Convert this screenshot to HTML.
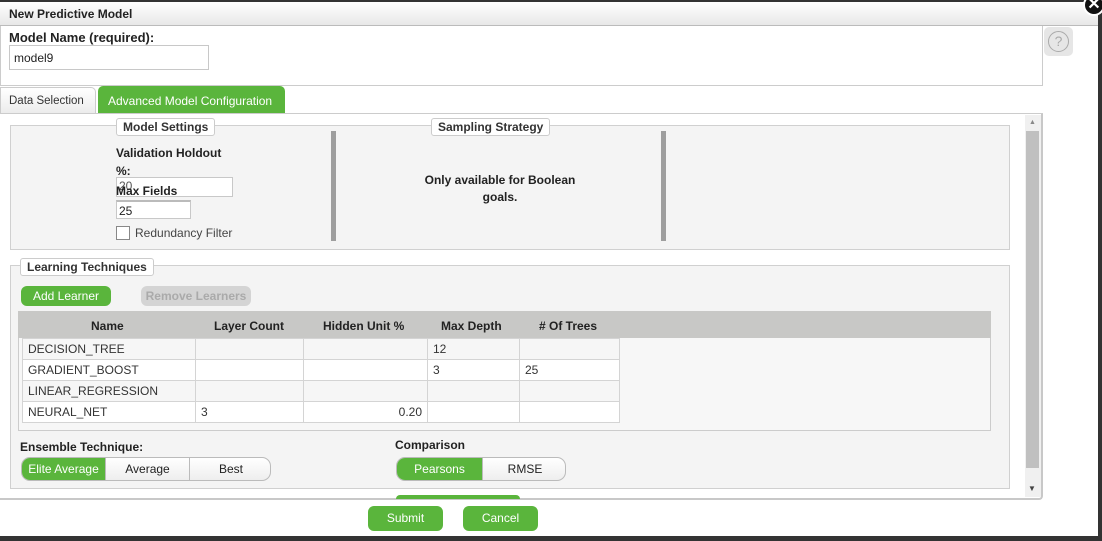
<!DOCTYPE html>
<html><head><style>
*{box-sizing:border-box;margin:0;padding:0}
body{width:1102px;height:541px;background:#333;position:relative;overflow:hidden;font-family:"Liberation Sans",sans-serif;font-size:12px;color:#222}
.a{position:absolute;white-space:nowrap}
.dlg{left:0;top:2px;width:1098px;height:534px;background:#fff}
.hdr{left:0;top:2px;width:1098px;height:24px;background:linear-gradient(#fff,#e8e8e8);border-bottom:1px solid #bbb;font-weight:bold;font-size:12px;padding:5px 9px}
.b{font-weight:bold}
.inp{background:#fff;border:1px solid #c8c8c8;padding:3px 4px;font-size:12px}
.fs{background:#f4f4f4;border:1px solid #d0d0d0}
.leg{background:#fff;border:1px solid #ccc;border-radius:3px;font-weight:bold;padding:1px 6px;font-size:12px;color:#333}
.g{background:#5ab53c;color:#fff;border-radius:6px;text-align:center}
table{border-collapse:collapse}
td{border:1px solid #d4d4d4;height:21px;padding:0 5px;font-size:12px;color:#333;background:#fff}
tr:nth-child(odd) td{background:#f6f6f6}
</style></head><body>
<div class="a dlg"></div>
<div class="a hdr">New Predictive Model</div>
<div class="a" style="left:0;top:26px;width:1043px;height:60px;border:1px solid #ccc;border-top:none"></div>
<div class="a b" style="left:9px;top:30px;font-size:13px">Model Name (required):</div>
<div class="a inp" style="left:9px;top:45px;width:200px;height:25px;padding-top:5px">model9</div>
<div class="a" style="left:1044px;top:27px;width:29px;height:29px;background:#e6e6e6;border-radius:5px"></div>
<div class="a" style="left:1048px;top:31px;width:21px;height:21px;border:1.5px solid #aaa;border-radius:50%;color:#aaa;text-align:center;font-size:14px;line-height:18px">?</div>
<div class="a" style="left:1083px;top:-6px;width:22px;height:22px;background:#111;border:2px solid #fff;border-radius:50%;color:#fff;font-weight:bold;text-align:center;font-size:16px;line-height:17px">✕</div>
<!-- tabs -->
<div class="a" style="left:0;top:113px;width:1043px;height:1px;background:#ccc"></div>
<div class="a" style="left:0;top:87px;width:96px;height:26px;background:linear-gradient(#fff,#ececec);border:1px solid #ccc;border-bottom:none;border-radius:0 5px 0 0;padding:7px 8px;color:#333;font-size:11.5px">Data Selection</div>
<div class="a" style="left:98px;top:86px;width:187px;height:27px;background:#5ab53c;border-radius:5px 5px 0 0;color:#fff;padding:8px 10px">Advanced Model Configuration</div>
<!-- content panel -->
<div class="a" style="left:0;top:114px;width:1043px;height:386px;border-right:2px solid #c8c8c8;border-bottom:2px solid #c8c8c8;border-radius:0 0 4px 0"></div>
<div class="a" style="left:1025px;top:115px;width:16px;height:382px;background:#f0f0f0"></div>
<div class="a" style="left:1026px;top:131px;width:13px;height:337px;background:#c0c0c0"></div>
<div class="a" style="left:1029px;top:119px;font-size:7px;color:#888">▲</div>
<div class="a" style="left:1028px;top:484px;font-size:8px;color:#444">▼</div>
<!-- model settings -->
<div class="a fs" style="left:10px;top:125px;width:1000px;height:125px"></div>
<div class="a leg" style="left:116px;top:118px">Model Settings</div>
<div class="a leg" style="left:431px;top:118px">Sampling Strategy</div>
<div class="a b" style="left:116px;top:144px;line-height:18px">Validation Holdout<br>%:</div>
<div class="a inp" style="left:116px;top:177px;width:117px;height:20px;padding:1px 2px;color:#555">20</div>
<div class="a b" style="left:116px;top:184px">Max Fields</div>
<div class="a inp" style="left:116px;top:200px;width:75px;height:19px;padding:2px 2px;border-top:2px solid #bbb">25</div>
<div class="a" style="left:116px;top:226px;width:14px;height:14px;border:1px solid #888;background:#fff"></div>
<div class="a" style="left:135px;top:226px;color:#444">Redundancy Filter</div>
<div class="a" style="left:331px;top:131px;width:5px;height:110px;background:#9e9e9e"></div>
<div class="a" style="left:661px;top:131px;width:5px;height:110px;background:#9e9e9e"></div>
<div class="a b" style="left:414px;top:172px;width:172px;text-align:center;line-height:17px;white-space:normal">Only available for Boolean goals.</div>
<!-- learning -->
<div class="a fs" style="left:10px;top:265px;width:1000px;height:224px"></div>
<div class="a leg" style="left:20px;top:258px">Learning Techniques</div>
<div class="a g" style="left:21px;top:286px;width:90px;height:20px;line-height:20px">Add Learner</div>
<div class="a" style="left:141px;top:286px;width:110px;height:20px;line-height:20px;background:#d4d4d4;color:#aaa;border-radius:6px;text-align:center;font-weight:bold">Remove Learners</div>
<div class="a" style="left:18px;top:311px;width:973px;height:120px;background:#f7f7f7;border:1px solid #ccc"></div>
<div class="a b" style="left:18px;top:311px;width:973px;height:27px;background:#c8c8c6;color:#333"></div>
<div class="a b" style="left:91px;top:319px">Name</div>
<div class="a b" style="left:214px;top:319px">Layer Count</div>
<div class="a b" style="left:323px;top:319px">Hidden Unit %</div>
<div class="a b" style="left:441px;top:319px">Max Depth</div>
<div class="a b" style="left:539px;top:319px">&#35; Of Trees</div>
<table class="a" style="left:22px;top:338px">
<tr><td style="width:173px">DECISION_TREE</td><td style="width:108px"></td><td style="width:124px"></td><td style="width:92px">12</td><td style="width:100px"></td></tr>
<tr><td>GRADIENT_BOOST</td><td></td><td></td><td>3</td><td>25</td></tr>
<tr><td>LINEAR_REGRESSION</td><td></td><td></td><td></td><td></td></tr>
<tr><td>NEURAL_NET</td><td>3</td><td style="text-align:right">0.20</td><td></td><td></td></tr>
</table>
<div class="a b" style="left:20px;top:440px">Ensemble Technique:</div>
<div class="a" style="left:21px;top:457px;width:250px;height:24px;border:1px solid #bbb;border-radius:9px;overflow:hidden;background:linear-gradient(#fff,#eee)">
<div class="a" style="left:0;top:0;width:83px;height:24px;background:#5ab53c;color:#fff;line-height:23px;text-align:center">Elite Average</div>
<div class="a" style="left:83px;top:0;width:84px;height:24px;border-left:1px solid #bbb;line-height:23px;text-align:center">Average</div>
<div class="a" style="left:167px;top:0;width:83px;height:24px;border-left:1px solid #bbb;line-height:23px;text-align:center">Best</div></div>
<div class="a b" style="left:395px;top:438px">Comparison</div>
<div class="a" style="left:396px;top:457px;width:170px;height:24px;border:1px solid #bbb;border-radius:9px;overflow:hidden;background:linear-gradient(#fff,#eee)">
<div class="a" style="left:0;top:0;width:85px;height:24px;background:#5ab53c;color:#fff;line-height:23px;text-align:center">Pearsons</div>
<div class="a" style="left:85px;top:0;width:85px;height:24px;border-left:1px solid #bbb;line-height:23px;text-align:center">RMSE</div></div>
<div class="a" style="left:396px;top:495px;width:124px;height:4px;background:#5ab53c;border-radius:4px 4px 0 0"></div>
<div class="a g" style="left:368px;top:506px;width:75px;height:25px;line-height:25px">Submit</div>
<div class="a g" style="left:463px;top:506px;width:75px;height:25px;line-height:25px">Cancel</div>
</body></html>
